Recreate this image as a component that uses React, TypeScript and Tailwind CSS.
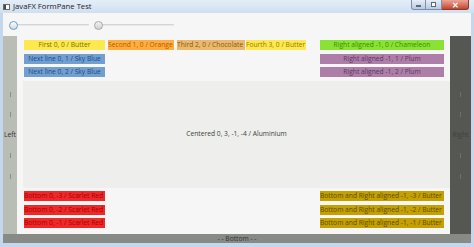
import React from "react";

const Tick = ({ color }: { color: string }) => (
  <div className="h-[20.5px] flex items-center justify-center">
    <div className={color === "light" ? "w-px h-[5px] bg-[#8c8e88]" : "w-px h-[5px] bg-[#6e706c]"} />
  </div>
);

const Slider = ({ focused }: { focused?: boolean }) => (
  <div className="relative w-[84px] h-[10px] flex items-center">
    <div className="ml-[4px] w-[76px] h-[2px] rounded-full bg-[#d4d4d4] border-b border-[#e8e8e8]" />
    {focused ? (
      <div className="absolute left-[-0.5px] top-[0.5px] w-[9px] h-[9px] rounded-full border-[1.5px] border-[#5a9fd4] bg-gradient-to-b from-[#ffffff] to-[#d8d8d8]" />
    ) : (
      <div className="absolute left-[-0.5px] top-[0.5px] w-[9px] h-[9px] rounded-full border border-[#a8a8a8] bg-gradient-to-b from-[#f4f4f4] to-[#cfcfcf]" />
    )}
  </div>
);

export default function App() {
  return (
    <div className="w-[474px] h-[247px] flex flex-col bg-[#c4d8ed] overflow-hidden font-['Open_Sans','Liberation_Sans',sans-serif]">
      {/* title bar */}
      <div className="h-[13px] flex items-start bg-gradient-to-b from-[#e4eef9] to-[#cfdff0]">
        <div className="mt-[4px] ml-[3px] w-[7px] h-[6px] border border-[#6a6a6a] bg-white flex">
          <div className="w-[2px] bg-[#4a4a4a]" />
        </div>
        <span className="ml-[3px] text-[7.7px] leading-[13px] text-[#1c1c1c]">JavaFX FormPane Test</span>
        <div className="ml-auto mr-[5px] flex">
          <div className="w-[15px] h-[10px] rounded-bl-[3px] border border-t-0 border-[#7d8fa6] bg-gradient-to-b from-[#e6eef7] to-[#b9cadf] flex items-center justify-center">
            <div className="w-[5px] h-[2px] mt-[2px] bg-white border border-[#566b86]" />
          </div>
          <div className="w-[16px] h-[10px] border border-t-0 border-l-0 border-[#7d8fa6] bg-gradient-to-b from-[#e6eef7] to-[#b9cadf] flex items-center justify-center">
            <div className="w-[5px] h-[5px] border border-[#566b86] bg-white" />
          </div>
          <div className="w-[27px] h-[10px] rounded-br-[3px] border border-t-0 border-l-0 border-[#8a3b30] bg-gradient-to-b from-[#e9a597] to-[#c7402c] flex items-center justify-center text-white text-[8px] leading-none font-bold">
            ✕
          </div>
        </div>
      </div>

      {/* client area */}
      <div className="h-[230px] mx-[3px] flex flex-col bg-[#f6f6f6]">
        <div className="h-[23px] pl-[6px] pt-[7px] flex gap-[1px]">
          <Slider focused />
          <Slider />
        </div>

        <div className="h-[198px] flex">
          <div className="w-[14px] bg-[#babdb6] flex flex-col justify-center items-center">
            <Tick color="light" />
            <Tick color="light" />
            <div className="h-[20.5px] flex items-center justify-center text-[6.7px] text-[#2e3436]">Left</div>
            <Tick color="light" />
            <Tick color="light" />
          </div>

          <div className="flex-1 pl-[7px] pt-[4px] pb-[6px] flex flex-col gap-[3.5px] text-[6.7px] leading-[10px] whitespace-nowrap">
            <div className="h-[10px] flex">
              <div className="w-[81px] bg-[#fce94f] text-[#7d6d00] text-center">First 0, 0 / Butter</div>
              <div className="ml-[3px] w-[66px] bg-[#fcaf3e] text-[#c25500] overflow-hidden">Second 1, 0 / Orange</div>
              <div className="ml-[3px] w-[68px] bg-[#e9b96e] text-[#8f5902] overflow-hidden">Third 2, 0 / Chocolate</div>
              <div className="ml-[1px] w-[60px] bg-[#fce94f] text-[#9a7800] overflow-hidden">Fourth 3, 0 / Butter</div>
              <div className="ml-auto mr-[6px] w-[124px] bg-[#8ae234] text-[#3f8a04] text-center">Right aligned -1, 0 / Chameleon</div>
            </div>
            <div className="h-[10px] flex">
              <div className="w-[81px] bg-[#729fcf] text-[#204a87] text-center">Next line 0, 1 / Sky Blue</div>
              <div className="ml-auto mr-[6px] w-[124px] bg-[#ad7fa8] text-[#5c3566] text-center">Right aligned -1, 1 / Plum</div>
            </div>
            <div className="h-[10px] flex">
              <div className="w-[81px] bg-[#729fcf] text-[#204a87] text-center">Next line 0, 2 / Sky Blue</div>
              <div className="ml-auto mr-[6px] w-[124px] bg-[#ad7fa8] text-[#5c3566] text-center">Right aligned -1, 2 / Plum</div>
            </div>

            <div className="flex-1 -ml-[1px] bg-[#eeeeec] flex items-center justify-center text-[#3c3e3a]">
              Centered 0, 3, -1, -4 / Aluminium
            </div>

            <div className="h-[10px] flex">
              <div className="w-[81px] bg-[#ef2929] text-[#a40000] overflow-hidden">Bottom 0, -3 / Scarlet Red</div>
              <div className="ml-auto mr-[6px] w-[124px] bg-[#c4a000] text-[#5e4c00] overflow-hidden">Bottom and Right aligned -1, -3 / Butter</div>
            </div>
            <div className="h-[10px] flex">
              <div className="w-[81px] bg-[#ef2929] text-[#a40000] overflow-hidden">Bottom 0, -2 / Scarlet Red</div>
              <div className="ml-auto mr-[6px] w-[124px] bg-[#c4a000] text-[#5e4c00] overflow-hidden">Bottom and Right aligned -1, -2 / Butter</div>
            </div>
            <div className="h-[10px] flex">
              <div className="w-[81px] bg-[#ef2929] text-[#a40000] overflow-hidden">Bottom 0, -1 / Scarlet Red</div>
              <div className="ml-auto mr-[6px] w-[124px] bg-[#c4a000] text-[#5e4c00] overflow-hidden">Bottom and Right aligned -1, -1 / Butter</div>
            </div>
          </div>

          <div className="w-[21px] bg-[#555753] flex flex-col justify-center items-center">
            <Tick color="dark" />
            <Tick color="dark" />
            <div className="h-[20.5px] flex items-center justify-center text-[6.7px] text-[#3f413e]">Right</div>
            <Tick color="dark" />
            <Tick color="dark" />
          </div>
        </div>

        <div className="h-[9px] bg-[#888a85] flex items-center justify-center text-[6.7px] leading-[9px] text-[#2e3436]">
          - - Bottom - -
        </div>
      </div>
      <div className="h-[4px]" />
    </div>
  );
}
